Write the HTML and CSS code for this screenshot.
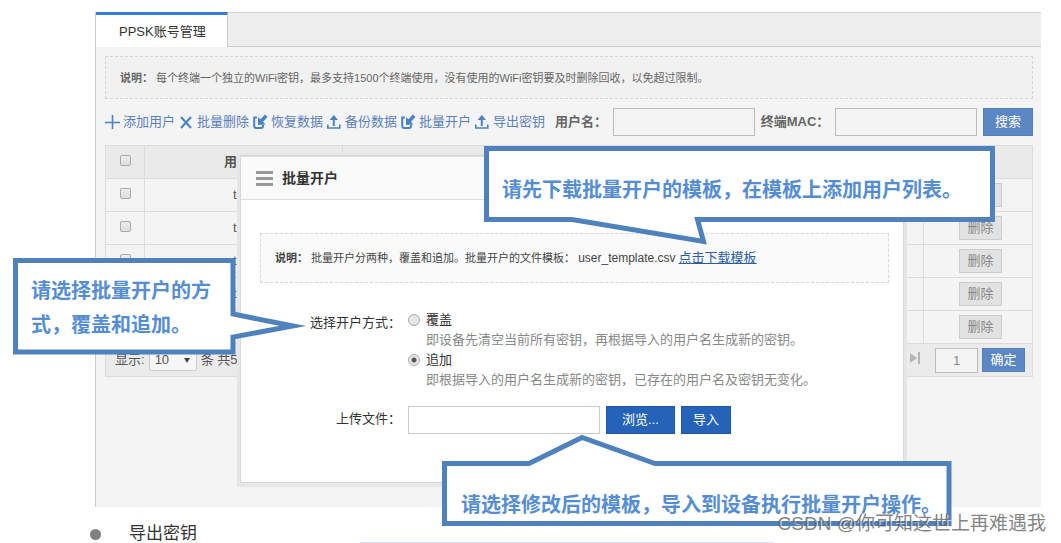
FILE: index.html
```html
<!DOCTYPE html>
<html lang="zh-CN">
<head>
<meta charset="utf-8">
<title>PPSK账号管理</title>
<link rel="stylesheet" href="styles.css">
</head>
<body>
<svg class="defs" aria-hidden="true">
  <symbol id="i-plus" viewBox="0 0 16 16"><path d="M7.500 1v14M0 8.500h15" fill="none" stroke="currentColor" stroke-width="1.600"/></symbol>
  <symbol id="i-cross" viewBox="0 0 16 16"><path d="M2 3l10 11M12 3L2 14" fill="none" stroke="currentColor" stroke-width="2"/></symbol>
  <symbol id="i-import" viewBox="0 0 16 16"><path d="M4 3.500H1.200V12q0 2 2 2H8q2 0 2-2v-1" fill="none" stroke="currentColor" stroke-width="2"/><path d="M5 11V3l2.400 2.200L12 .5 14.500 3 10 7.800 12.500 10.500z" fill="currentColor"/></symbol>
  <symbol id="i-export" viewBox="0 0 16 16"><path d="M.8 10.500V14h12v-3.500" fill="none" stroke="currentColor" stroke-width="1.600"/><path d="M6.800 1l4.200 5H7.800v6h-2V6H2.600z" fill="currentColor"/></symbol>
</svg>
<main class="panel">
  <nav class="tabs"><a class="tab" href="#ppsk">PPSK账号管理</a></nav>
  <div class="content">
    <p class="note"><b>说明：</b> 每个终端一个独立的WiFi密钥，最多支持1500个终端使用，没有使用的WiFi密钥要及时删除回收，以免超过限制。</p>
    <form class="toolbar">
      <div class="tools">
        <button class="tool" type="button"><svg class="icon"><use href="#i-plus"/></svg>添加用户</button>
        <button class="tool" type="button"><svg class="icon"><use href="#i-cross"/></svg>批量删除</button>
        <button class="tool" type="button"><svg class="icon"><use href="#i-import"/></svg>恢复数据</button>
        <button class="tool" type="button"><svg class="icon"><use href="#i-export"/></svg>备份数据</button>
        <button class="tool" type="button"><svg class="icon"><use href="#i-import"/></svg>批量开户</button>
        <button class="tool" type="button"><svg class="icon"><use href="#i-export"/></svg>导出密钥</button>
      </div>
      <label class="search-label" for="user">用户名：</label><input class="field" id="user" type="text">
      <label class="search-label" for="mac">终端MAC：</label><input class="field" id="mac" type="text">
      <button class="btn btn-soft search" type="button">搜索</button>
    </form>
    <table class="users">
      <colgroup><col class="c-check"><col class="c-name"><col><col class="c-gap"><col class="c-action"></colgroup>
      <thead><tr><th><input class="check" type="checkbox" aria-label="全选"></th><th>用户名</th><th></th><th></th><th></th></tr></thead>
      <tbody>
        <tr><td><input class="check" type="checkbox" aria-label="选择"></td><td>test</td><td></td><td></td><td><button class="del" type="button">删除</button></td></tr>
        <tr><td><input class="check" type="checkbox" aria-label="选择"></td><td>test</td><td></td><td></td><td><button class="del" type="button">删除</button></td></tr>
        <tr><td><input class="check" type="checkbox" aria-label="选择"></td><td>test</td><td></td><td></td><td><button class="del" type="button">删除</button></td></tr>
        <tr><td><input class="check" type="checkbox" aria-label="选择"></td><td>test</td><td></td><td></td><td><button class="del" type="button">删除</button></td></tr>
        <tr><td><input class="check" type="checkbox" aria-label="选择"></td><td>test</td><td></td><td></td><td><button class="del" type="button">删除</button></td></tr>
      </tbody>
    </table>
    <div class="pager">
      <label for="size">显示:</label>
      <span class="select-wrap"><select class="size" id="size"><option>10</option></select></span>
      <span class="total">条 共5</span>
      <button class="last" type="button" aria-label="末页"><svg viewBox="0 0 10 12"><path d="M0 1l7 5-7 5zM8 0h2v12H8z" fill="currentColor"/></svg></button>
      <input class="page-no" type="text" value="1" aria-label="页码">
      <button class="btn btn-soft go" type="button">确定</button>
    </div>
  </div>

  <section class="modal" role="dialog" aria-labelledby="modal-title">
    <header class="modal-head"><span class="bars"><i></i><i></i><i></i></span><h2 id="modal-title">批量开户</h2></header>
    <p class="note modal-note"><b>说明：</b> 批量开户分两种，覆盖和追加。批量开户的文件模板： <span class="file">user_template.csv</span> <a class="download" href="#template">点击下载模板</a></p>
    <form class="form">
      <span class="form-label" id="mode-label">选择开户方式：</span>
      <div class="modes" role="radiogroup" aria-labelledby="mode-label">
        <input class="radio" type="radio" name="mode" id="cover"><label for="cover">覆盖</label>
        <p>即设备先清空当前所有密钥，再根据导入的用户名生成新的密钥。</p>
        <input class="radio" type="radio" name="mode" id="append" checked><label for="append">追加</label>
        <p>即根据导入的用户名生成新的密钥，已存在的用户名及密钥无变化。</p>
      </div>
      <label class="form-label" for="upload">上传文件：</label>
      <div class="upload">
        <input class="upload-field" id="upload" type="text">
        <button class="btn browse" type="button">浏览...</button>
        <button class="btn import" type="button">导入</button>
      </div>
    </form>
  </section>
</main>

<section class="next"><ul><li>导出密钥</li></ul><div class="rule"></div></section>

<aside class="callout callout-download">
  <svg width="512" height="100"><path d="M2.500 2.500H508.500V73.500H213.500L219.500 95.500 88 73.500H2.500z"/></svg>
  <p>请先下载批量开户的模板，在模板上添加用户列表。</p>
</aside>
<aside class="callout callout-mode">
  <svg width="300" height="98"><path d="M2.500 2.500H220V56L280 68 220 79V94H2.500z"/></svg>
  <p>请选择批量开户的方<br>式，覆盖和追加。</p>
</aside>
<aside class="callout callout-import">
  <svg width="512" height="94"><path d="M2.500 29.500H87L140 3.500 213 29.500H507V89.500H2.500z"/></svg>
  <p>请选择修改后的模板，导入到设备执行批量开户操作。</p>
</aside>
<div class="watermark">CSDN @你可知这世上再难遇我</div>
</body>
</html>
```

FILE: styles.css
```css
* { box-sizing: border-box; }
body {
  position: relative;
  margin: 0;
  padding-top: 12px;
  overflow: hidden;
  background: #fff;
  color: #555;
  font: 13px/20px "Liberation Sans", "Noto Sans CJK SC", sans-serif;
}
p, h2, ul { margin: 0; padding: 0; }
button, input, select { margin: 0; padding: 0; font: inherit; color: inherit; }
.defs { position: absolute; width: 0; height: 0; }

.panel {
  position: relative;
  margin: 0 20px 0 95px;
  padding-bottom: 130px;
  background: #f4f4f4;
  border-left: 1px solid #ccc;
}
.tabs {
  display: flex;
  height: 35px;
  background: #eee;
  border-top: 1px solid #d4d4d4;
  border-bottom: 1px solid #ccc;
}
.tab {
  height: 35px;
  padding: 6px 21px 0 23px;
  margin-top: -1px;
  border-top: 3px solid #3a7bd8;
  border-right: 1px solid #ccc;
  background: #fff;
  color: #333;
  line-height: 22px;
  text-decoration: none;
}
.content { padding: 9px 8px 0 9px; }
.note {
  padding: 11px 14px 10px;
  border: 1px dashed #d6d6d6;
  background: #f1f1f1;
  color: #666;
  font-size: 11px;
  line-height: 20px;
  white-space: nowrap;
}
.toolbar { display: flex; align-items: center; gap: 6px; height: 28px; margin: 9px 0; }
.tools { display: flex; gap: 4px; margin-right: 4px; }
.tool {
  display: flex;
  align-items: center;
  gap: 2px;
  border: 0;
  background: none;
  color: #5a80bd;
  white-space: nowrap;
}
.icon { width: 16px; height: 16px; color: #4a82c6; }
.search-label { font-weight: 700; color: #666; white-space: nowrap; }
.field { flex: 1; min-width: 0; height: 28px; border: 1px solid #bbb; background: #f4f4f4; }
.btn { border: 1px solid #1d5aa8; background: #2563b8; color: #fff; white-space: nowrap; }
.btn-soft { border-color: #5080bd; background: #5b87c5; }
.search { width: 50px; height: 28px; }

.users { width: 100%; table-layout: fixed; border-collapse: collapse; }
.users th, .users td { height: 33px; padding: 0; border: 1px solid #dcdcdc; text-align: center; line-height: 16px; }
.users th { background: #eaeaea; color: #555; }
.users td:last-child { padding-left: 5px; }
.c-check { width: 39px; }
.c-name { width: 198px; }
.c-gap { width: 200px; }
.c-action { width: 109px; }
.check {
  appearance: none;
  display: inline-block;
  width: 11px;
  height: 11px;
  border: 1px solid #aaa;
  border-radius: 2px;
  background: linear-gradient(#eee, #ddd);
}
.del { display: block; width: 43px; height: 24px; margin: 0 auto; border: 1px solid #ccc; background: #e2e2e2; color: #888; }
.pager {
  display: flex;
  align-items: center;
  gap: 4px;
  height: 33px;
  padding: 0 7px 0 9px;
  border: 1px solid #dcdcdc;
  border-top: 0;
  background: #ebebeb;
}
.select-wrap { position: relative; }
.select-wrap::after {
  content: "";
  position: absolute;
  right: 7px;
  top: 9px;
  border: 3px solid transparent;
  border-top: 5px solid #444;
  border-bottom: 0;
}
.size { display: block; appearance: none; width: 48px; height: 22px; padding-left: 5px; border: 1px solid #ccc; border-radius: 2px; background: #f6f6f6; }
.last { width: 10px; height: 12px; margin: 0 11px 4px auto; border: 0; background: none; color: #b5b5b5; }
.last svg { display: block; width: 10px; height: 12px; }
.page-no { width: 43px; height: 25px; border: 1px solid #bbb; background: #f4f4f4; color: #888; text-align: center; }
.go { width: 43px; height: 24px; }

.modal {
  position: absolute;
  top: 144px;
  left: 145px;
  right: 138px;
  padding-bottom: 48px;
  border-top: 1px solid #ddd;
  background: #fff;
  box-shadow: 0 0 0 1px #d8d8d8, 0 1px 0 4px #e6e6e6;
  color: #333;
}
.modal-head { display: flex; align-items: center; gap: 9px; height: 43px; padding-left: 15px; border-bottom: 1px solid #ddd; background: #fafafa; }
.modal-head h2 { font-size: 14px; line-height: 20px; color: #333; }
.bars { display: grid; gap: 3px; }
.bars i { width: 17px; height: 3px; background: #999; }
.modal-note { margin: 33px 14px 0 19px; padding: 14px; background: #fafafa; color: #444; }
.file { font-size: 12px; }
.download { font-size: 13px; color: #2a5caa; }
.form { display: grid; grid-template-columns: 160px 1fr; column-gap: 7px; row-gap: 16px; margin-top: 27px; }
.form-label { text-align: right; white-space: nowrap; padding-top: 3px; }
.modes { display: grid; grid-template-columns: 12px 1fr; column-gap: 6px; align-items: center; }
.modes p { grid-column: 2; color: #888; white-space: nowrap; }
.radio {
  appearance: none;
  width: 12px;
  height: 12px;
  border: 1px solid #aaa;
  border-radius: 50%;
  background: #e6e6e6;
}
.radio:checked { background: radial-gradient(circle, #555 0 2px, #e6e6e6 3px); }
.upload { display: flex; gap: 6px; height: 28px; }
.upload-field { width: 192px; border: 1px solid #ccc; background: #fff; }
.browse { width: 69px; }
.import { width: 50px; }

.next { padding-left: 90px; color: #333; }
.next ul { list-style: none; }
.next li { display: flex; align-items: center; gap: 28px; padding-top: 19px; font-size: 17px; line-height: 16px; }
.next li::before { content: ""; width: 11px; height: 11px; border-radius: 50%; background: #808080; }
.rule { width: 413px; margin-left: 270px; border-top: 1px solid #d8e0ef; }

.callout { position: absolute; color: #548dd4; font-size: 20px; line-height: 34px; font-weight: 700; white-space: nowrap; }
.callout svg { display: block; }
.callout path { fill: #fff; stroke: #4f81bd; stroke-width: 5; stroke-miterlimit: 12; }
.callout p { position: absolute; }
.callout-download { left: 484px; top: 146px; }
.callout-download p { left: 18px; top: 27px; }
.callout-mode { left: 13px; top: 258px; }
.callout-mode p { left: 18px; top: 16px; }
.callout-import { left: 442px; top: 434px; }
.callout-import p { left: 19px; top: 54px; }
.watermark {
  position: absolute;
  right: 15px;
  top: 512px;
  color: rgba(90, 90, 90, .75);
  font-size: 19px;
  line-height: 24px;
  text-shadow: 1px 1px 0 rgba(255, 255, 255, .7);
  white-space: nowrap;
}
```
